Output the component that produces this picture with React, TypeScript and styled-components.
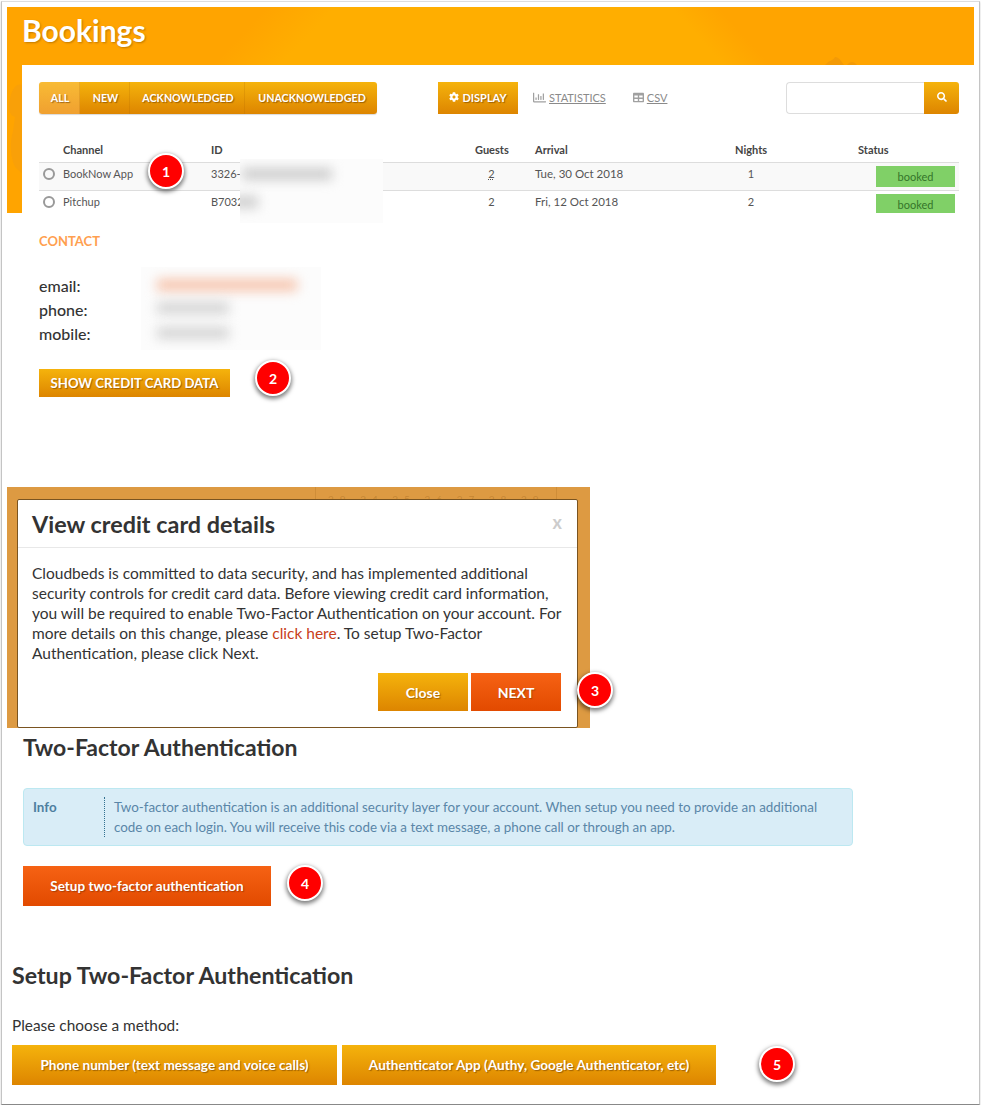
import * as React from 'react'
import styled, { createGlobalStyle } from 'styled-components'
import { FaCog, FaRegChartBar, FaSearch, FaTable } from 'react-icons/fa'

const GlobalStyle = createGlobalStyle`
	html, body {
		margin: 0;
		background: #fff;
	}
	body {
		font-family: Lato, 'Open Sans', sans-serif;
		color: #333;
	}
`

const AMBER = 'linear-gradient(#f5b30c, #dd8500)'
const FLAME = 'linear-gradient(#f66214, #e24a00)'

const Frame = styled.div`
	position: relative;
	box-sizing: border-box;
	width: 979px;
	height: 1104px;
	margin: 1px 0 0 1px;
	padding-top: 5px;
	background: #fff;
	border: 1px solid #ddd;
	border-left-color: #c4c4c4;
	border-right-color: #c4c4c4;
	border-bottom: 1px solid #888;
	box-shadow: 0 1px 2px rgba(0, 0, 0, 0.2);
	overflow: hidden;
`

const BookingsShot = styled.section`
	position: relative;
	box-sizing: border-box;
	width: 967px;
	height: 206px;
	margin-left: 5px;
	overflow: hidden;
	background:
		linear-gradient(133deg, #ffa400 0 190px, rgba(255, 164, 0, 0) 240px),
		linear-gradient(228deg, #ffa400 0 190px, rgba(255, 164, 0, 0) 225px),
		#ffae00;
`

const Splotch = styled.svg`
	position: absolute;
	left: 0;
	top: 58px;
	width: 15px;
	height: 148px;
`

const Freckle = styled.svg`
	position: absolute;
	left: 810px;
	top: 50px;
	width: 50px;
	height: 8px;
`

const Bookings = styled.h1`
	height: 58px;
	margin: 0;
	padding-left: 15px;
	font-size: 30px;
	font-weight: 700;
	line-height: 46px;
	color: #fff;
	text-shadow: 1px 1px 2px rgba(120, 70, 0, 0.45);
`

const Panel = styled.div`
	position: relative;
	box-sizing: border-box;
	height: 148px;
	margin-left: 15px;
	padding: 17px 15px 0 17px;
	background: #fff;
`

const Toolbar = styled.div`
	display: flex;
	align-items: stretch;
	height: 32px;
`

const Tabs = styled.div`
	display: flex;
	border-radius: 3px;
	overflow: hidden;
	box-shadow: 0 1px 1px rgba(0, 0, 0, 0.15);
`

const Tab = styled.div<{ $width: number; $active?: boolean }>`
	display: flex;
	align-items: center;
	justify-content: center;
	width: ${p => p.$width}px;
	padding: 0 0 2px 2px;
	background: ${p => (p.$active ? 'linear-gradient(#f8bb35, #f0a030)' : AMBER)};
	border-right: 1px solid rgba(170, 100, 0, 0.2);
	box-sizing: border-box;
	font-size: 10.7px;
	font-weight: 700;
	color: #fff;
	text-shadow: 1px 1px 1px rgba(110, 60, 0, 0.6);
	&:last-child {
		border-right: 0;
	}
`

const DisplayButton = styled.div`
	display: flex;
	align-items: center;
	justify-content: center;
	gap: 3px;
	width: 80px;
	margin-left: 61px;
	padding-bottom: 2px;
	box-sizing: border-box;
	background: ${AMBER};
	font-size: 11px;
	font-weight: 700;
	color: #fff;
	text-shadow: 1px 1px 1px rgba(110, 60, 0, 0.6);
`

const ToolLink = styled.div<{ $left: number }>`
	display: flex;
	align-items: center;
	gap: 3px;
	margin-left: ${p => p.$left}px;
	padding-bottom: 2px;
	font-size: 11px;
	color: #8a8a8a;
	svg {
		color: #a0a0a0;
	}
	span {
		text-decoration: underline;
	}
`

const SearchBox = styled.div`
	display: flex;
	margin-left: auto;
	width: 173px;
`

const SearchInput = styled.div`
	flex: 1;
	box-sizing: border-box;
	background: #fff;
	border: 1px solid #ddd;
	border-right: 0;
	border-radius: 4px 0 0 4px;
`

const SearchButton = styled.div`
	display: flex;
	align-items: center;
	justify-content: center;
	width: 35px;
	padding-bottom: 2px;
	box-sizing: border-box;
	background: ${AMBER};
	border-radius: 0 3px 3px 0;
	color: #fff;
	font-size: 10px;
`

const Row = styled.div<{ $head?: boolean; $shaded?: boolean }>`
	display: grid;
	grid-template-columns: 24px 148px 264px 60px 200px 123px 101px;
	grid-template-rows: ${p => (p.$head ? 17 : 21)}px;
	align-items: center;
	height: ${p => (p.$head ? 21 : 28)}px;
	margin-top: ${p => (p.$head ? 27 : 0)}px;
	box-sizing: border-box;
	border-top: ${p => (p.$head ? '0' : '1px solid #ddd')};
	background: ${p => (p.$shaded ? '#f9f9f9' : 'transparent')};
	font-size: 11px;
	font-weight: ${p => (p.$head ? 700 : 400)};
	color: ${p => (p.$head ? '#444' : '#555')};
`

const Radio = styled.i`
	display: block;
	box-sizing: border-box;
	width: 12px;
	height: 12px;
	margin-left: 4px;
	border: 2px solid #999;
	border-radius: 50%;
`

const NumberCell = styled.div<{ $pad: number }>`
	padding-right: ${p => p.$pad}px;
	text-align: center;
`

const Guests = styled.abbr`
	text-decoration: underline dotted #555;
`

const Arrival = styled.div`
	font-size: 11.5px;
`

const Booked = styled.div`
	align-self: start;
	width: 79px;
	height: 21px;
	margin: 3px 0 0 18px;
	background: #80d067;
	font-size: 11px;
	line-height: 22px;
	text-align: center;
	color: #35752a;
`

const Blur = styled.div<{ $left: number; $top: number; $width: number; $height: number }>`
	position: absolute;
	left: ${p => p.$left}px;
	top: ${p => p.$top}px;
	width: ${p => p.$width}px;
	height: ${p => p.$height}px;
	background: #fcfcfc;
	overflow: hidden;
`

const Smear = styled.i<{ $left: number; $top: number; $width: number; $color: string }>`
	position: absolute;
	left: ${p => p.$left}px;
	top: ${p => p.$top}px;
	width: ${p => p.$width}px;
	height: 12px;
	background: ${p => p.$color};
	filter: blur(6px);
`

const Contact = styled.section`
	margin: 20px 0 0 37px;
`

const ContactLabel = styled.h3`
	margin: 0;
	font-size: 13px;
	font-weight: 700;
	line-height: 16px;
	color: #ff9f4f;
`

const ContactList = styled.dl`
	margin: 25px 0 0;
	font-size: 16px;
	font-weight: 500;
	line-height: 24px;
	color: #333;
`

const ContactLine = styled.dt`
	margin: 0;
`

const CalloutRow = styled.div<{ $gap: number; $top: number; $left?: number }>`
	display: flex;
	align-items: flex-start;
	gap: ${p => p.$gap}px;
	margin: ${p => p.$top}px 0 0 ${p => p.$left ?? 0}px;
`

const CardButton = styled.div`
	display: flex;
	align-items: center;
	justify-content: center;
	width: 191px;
	height: 28px;
	background: ${AMBER};
	font-size: 13.2px;
	font-weight: 700;
	color: #fff;
	text-shadow: 1px 1px 1px rgba(110, 60, 0, 0.6);
`

const Callout = styled.div<{ $at?: [number, number]; $lift?: number; $left?: number }>`
	display: flex;
	align-items: center;
	justify-content: center;
	flex: none;
	box-sizing: border-box;
	width: 36px;
	height: 36px;
	margin-top: ${p => p.$lift ?? 0}px;
	margin-left: ${p => p.$left ?? 0}px;
	background: #f00;
	border: 2px solid #fff;
	border-radius: 50%;
	box-shadow: 0 2px 4px 1px rgba(0, 0, 0, 0.5);
	font-size: 14px;
	font-weight: 700;
	color: #fff;
	${p => (p.$at ? `position: absolute; left: ${p.$at[0]}px; top: ${p.$at[1]}px;` : '')}
`

const ModalShot = styled.section`
	position: relative;
	box-sizing: border-box;
	width: 583px;
	height: 241px;
	margin: 90px 0 0 5px;
	padding: 12px 0 0 10px;
	background: #dd9a42;
	overflow: hidden;
`

const Ghost = styled.div`
	position: absolute;
	left: 308px;
	top: 0;
	bottom: 0;
	width: 228px;
	border-left: 1px solid rgba(150, 90, 20, 0.2);
	border-right: 1px solid rgba(150, 90, 20, 0.2);
	padding: 6px 0 0 12px;
	font-size: 10px;
	letter-spacing: 6px;
	color: rgba(150, 90, 20, 0.35);
`

const Modal = styled.div`
	position: relative;
	box-sizing: border-box;
	width: 561px;
	height: 229px;
	background: #fff;
	border: 1px solid #7a5420;
	border-radius: 2px;
`

const ModalHeader = styled.div`
	display: flex;
	justify-content: space-between;
	box-sizing: border-box;
	height: 48px;
	padding: 0 15px 0 14px;
	border-bottom: 1px solid #e8e8e8;
`

const ModalTitle = styled.h2`
	margin: 0;
	font-size: 23.4px;
	font-weight: 700;
	line-height: 48px;
	color: #333;
`

const ModalClose = styled.div`
	font-size: 18px;
	font-weight: 700;
	line-height: 44px;
	color: #ccc;
`

const ModalBody = styled.p`
	margin: 0;
	padding: 15px 14px 0;
	font-size: 15.5px;
	line-height: 20px;
	color: #333;
	a {
		color: #c8401a;
	}
`

const ModalActions = styled.div`
	display: flex;
	justify-content: flex-end;
	gap: 3px;
	margin-top: 10px;
	padding-right: 16px;
`

const ModalButton = styled.div<{ $flame?: boolean }>`
	display: flex;
	align-items: center;
	justify-content: center;
	width: 90px;
	height: 38px;
	background: ${p => (p.$flame ? FLAME : AMBER)};
	font-size: 14px;
	font-weight: 700;
	color: #fff;
	text-shadow: 1px 1px 1px rgba(110, 60, 0, 0.5);
`

const Heading = styled.h2<{ $left: number; $top: number; $size: number }>`
	margin: ${p => p.$top}px 0 0 ${p => p.$left}px;
	font-size: ${p => p.$size}px;
	font-weight: 700;
	line-height: 28px;
	color: #333;
`

const InfoBox = styled.div`
	display: flex;
	box-sizing: border-box;
	width: 830px;
	height: 58px;
	margin: 27px 0 0 21px;
	padding: 8px 9px;
	background: #d9edf7;
	border: 1px solid #bce8f1;
	border-radius: 4px;
	font-size: 13.4px;
	line-height: 20px;
	color: #5a86a8;
`

const InfoLabel = styled.strong`
	width: 71px;
	flex: none;
	color: #4e7f9f;
`

const InfoText = styled.div`
	padding-left: 9px;
	border-left: 1px dotted #31708f;
`

const SetupButton = styled.div`
	display: flex;
	align-items: center;
	justify-content: center;
	width: 248px;
	height: 40px;
	background: ${FLAME};
	font-size: 13.5px;
	font-weight: 700;
	color: #fff;
	text-shadow: 1px 1px 1px rgba(110, 40, 0, 0.5);
`

const ChooseText = styled.p`
	margin: 26px 0 0 10px;
	font-size: 15.4px;
	line-height: 20px;
	color: #333;
`

const MethodRow = styled.div`
	display: flex;
	align-items: flex-start;
	gap: 5px;
	margin: 10px 0 0 10px;
`

const MethodButton = styled.div<{ $width: number }>`
	display: flex;
	align-items: center;
	justify-content: center;
	width: ${p => p.$width}px;
	height: 40px;
	background: ${AMBER};
	font-size: 13.6px;
	font-weight: 700;
	color: #fff;
	text-shadow: 1px 1px 1px rgba(110, 60, 0, 0.6);
`

const tabs = [
	{ label: 'ALL', width: 41, active: true },
	{ label: 'NEW', width: 50 },
	{ label: 'ACKNOWLEDGED', width: 115 },
	{ label: 'UNACKNOWLEDGED', width: 132 },
]

const bookings = [
	{ channel: 'BookNow App', id: '3326-', guests: '2', arrival: 'Tue, 30 Oct 2018', nights: '1', shaded: true },
	{ channel: 'Pitchup', id: 'B7032', guests: '2', arrival: 'Fri, 12 Oct 2018', nights: '2' },
]

const App = () => (
	<Frame>
		<GlobalStyle />
		<BookingsShot>
			<Splotch viewBox='0 0 15 148'>
				<path d='M15 20 C9 18 5 24 3 34 C0 42 2 50 8 52 L6 66 C2 80 4 98 10 104 L15 108 Z' fill='#f9a008' />
			</Splotch>
			<Freckle viewBox='0 0 50 8'>
				<path d='M8 8 C12 3 16 4 18 0 C22 0 24 4 27 8 Z M30 8 C33 4 37 4 40 8 Z' fill='#f39a06' />
			</Freckle>
			<Bookings>Bookings</Bookings>
			<Panel>
				<Toolbar>
					<Tabs>
						{tabs.map(tab => (
							<Tab key={tab.label} $width={tab.width} $active={tab.active}>
								{tab.label}
							</Tab>
						))}
					</Tabs>
					<DisplayButton>
						<FaCog size={10} /> DISPLAY
					</DisplayButton>
					<ToolLink $left={15}>
						<FaRegChartBar size={13} />
						<span>STATISTICS</span>
					</ToolLink>
					<ToolLink $left={27}>
						<FaTable size={11} />
						<span>CSV</span>
					</ToolLink>
					<SearchBox>
						<SearchInput />
						<SearchButton>
							<FaSearch />
						</SearchButton>
					</SearchBox>
				</Toolbar>
				<Row $head>
					<div />
					<div>Channel</div>
					<div>ID</div>
					<div>Guests</div>
					<div>Arrival</div>
					<div>Nights</div>
					<div>Status</div>
				</Row>
				{bookings.map(booking => (
					<Row key={booking.id} $shaded={booking.shaded}>
						<Radio />
						<div>{booking.channel}</div>
						<div>{booking.id}</div>
						<NumberCell $pad={27}>
							{booking.shaded ? <Guests>{booking.guests}</Guests> : booking.guests}
						</NumberCell>
						<Arrival>{booking.arrival}</Arrival>
						<NumberCell $pad={91}>{booking.nights}</NumberCell>
						<Booked>booked</Booked>
					</Row>
				))}
			</Panel>
		</BookingsShot>
		<Blur $left={238} $top={157} $width={143} $height={64}>
			<Smear $left={2} $top={9} $width={90} $color='#ccc' />
			<Smear $left={-8} $top={37} $width={26} $color='#ccc' />
		</Blur>
		<Callout $at={[146, 151]}>1</Callout>
		<Contact>
			<ContactLabel>CONTACT</ContactLabel>
			<ContactList>
				<ContactLine>email:</ContactLine>
				<ContactLine>phone:</ContactLine>
				<ContactLine>mobile:</ContactLine>
			</ContactList>
			<CalloutRow $gap={25} $top={23}>
				<CardButton>SHOW CREDIT CARD DATA</CardButton>
				<Callout $lift={-9}>2</Callout>
			</CalloutRow>
		</Contact>
		<Blur $left={139} $top={265} $width={180} $height={83}>
			<Smear $left={16} $top={12} $width={140} $color='#f6c4ad' />
			<Smear $left={16} $top={35} $width={72} $color='#d4d4d4' />
			<Smear $left={16} $top={60} $width={72} $color='#d4d4d4' />
		</Blur>
		<ModalShot>
			<Ghost>29 24 25 26 27 28 29 30</Ghost>
			<Modal>
				<ModalHeader>
					<ModalTitle>View credit card details</ModalTitle>
					<ModalClose>x</ModalClose>
				</ModalHeader>
				<ModalBody>
					Cloudbeds is committed to data security, and has implemented additional security controls for
					credit card data. Before viewing credit card information, you will be required to enable
					Two-Factor Authentication on your account. For more details on this change, please{' '}
					<a>click here</a>. To setup Two-Factor Authentication, please click Next.
				</ModalBody>
				<ModalActions>
					<ModalButton>Close</ModalButton>
					<ModalButton $flame>NEXT</ModalButton>
				</ModalActions>
			</Modal>
		</ModalShot>
		<Callout $at={[575, 670]}>3</Callout>
		<Heading $left={21} $top={5} $size={23}>
			Two-Factor Authentication
		</Heading>
		<InfoBox>
			<InfoLabel>Info</InfoLabel>
			<InfoText>
				Two-factor authentication is an additional security layer for your account. When setup you need to
				provide an additional code on each login. You will receive this code via a text message, a phone
				call or through an app.
			</InfoText>
		</InfoBox>
		<CalloutRow $gap={16} $top={20} $left={21}>
			<SetupButton>Setup two-factor authentication</SetupButton>
			<Callout $lift={-1}>4</Callout>
		</CalloutRow>
		<Heading $left={10} $top={55} $size={23.2}>
			Setup Two-Factor Authentication
		</Heading>
		<ChooseText>Please choose a method:</ChooseText>
		<MethodRow>
			<MethodButton $width={325}>Phone number (text message and voice calls)</MethodButton>
			<MethodButton $width={374}>Authenticator App (Authy, Google Authenticator, etc)</MethodButton>
			<Callout $lift={1} $left={38}>
				5
			</Callout>
		</MethodRow>
	</Frame>
)

export default App
